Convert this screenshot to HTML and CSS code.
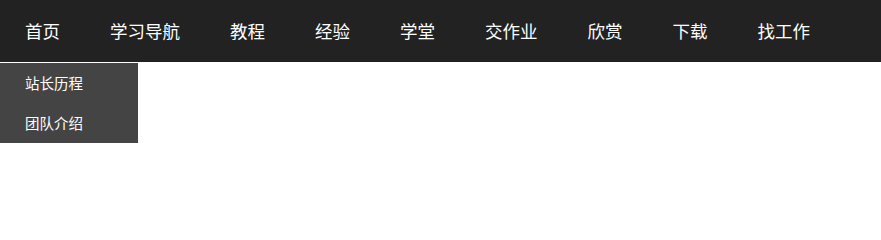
FILE: index.html
```html
<!DOCTYPE html>
<html lang="zh-CN">
<head>
<meta charset="utf-8">
<title>导航</title>
<link rel="stylesheet" href="styles.css">
</head>
<body>
<nav class="nav">
  <div class="menu">
    <a class="item" href="#">首页</a>
    <a class="item" href="#">学习导航</a>
    <a class="item" href="#">教程</a>
    <a class="item" href="#">经验</a>
    <a class="item" href="#">学堂</a>
    <a class="item" href="#">交作业</a>
    <a class="item" href="#">欣赏</a>
    <a class="item" href="#">下载</a>
    <a class="item" href="#">找工作</a>
  </div>
</nav>
<div class="dropdown">
  <a class="drop-item" href="#">站长历程</a>
  <a class="drop-item" href="#">团队介绍</a>
</div>
</body>
</html>
```
FILE: styles.css
```css
html, body {
  margin: 0;
  padding: 0;
  background: #fff;
}
body {
  font-family: "Noto Sans CJK SC", "Microsoft YaHei", sans-serif;
}
.nav {
  background: #222;
  height: 62px;
}
.menu {
  display: flex;
  height: 62px;
}
.item {
  display: block;
  padding: 0 25px;
  line-height: 62px;
  font-size: 17.5px;
  color: #fff;
  text-decoration: none;
  white-space: nowrap;
}
.dropdown {
  width: 138px;
  background: #444;
  border-top: 1px solid #fff;
  display: flex;
  flex-direction: column;
}
.drop-item {
  display: block;
  height: 40px;
  line-height: 40px;
  padding: 0 25px;
  font-size: 14.5px;
  color: #fff;
  text-decoration: none;
  white-space: nowrap;
}
```
